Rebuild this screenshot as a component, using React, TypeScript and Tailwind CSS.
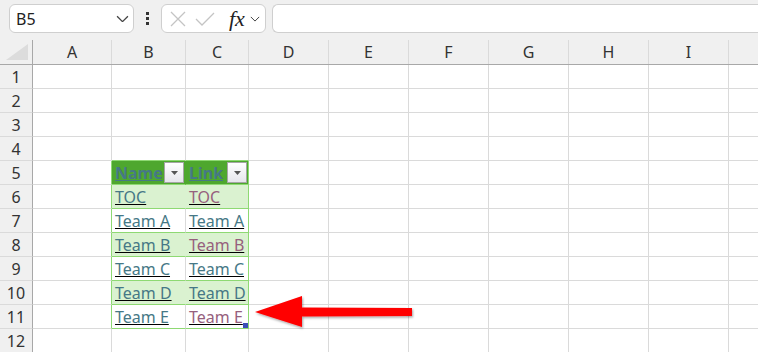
import React from "react";

const cols = ["A", "B", "C", "D", "E", "F", "G", "H", "I", ""];
const colW = [79, 74, 63, 80, 80, 80, 80, 80, 80, 30];

type Cell = { text: string; color: string } | null;

const BLUE = "#467886";
const PURPLE = "#96607d";

const tableRows: { b: Cell; c: Cell; band: boolean }[] = [
  { b: { text: "TOC", color: BLUE }, c: { text: "TOC", color: PURPLE }, band: true },
  { b: { text: "Team A", color: BLUE }, c: { text: "Team A", color: BLUE }, band: false },
  { b: { text: "Team B", color: BLUE }, c: { text: "Team B", color: PURPLE }, band: true },
  { b: { text: "Team C", color: BLUE }, c: { text: "Team C", color: BLUE }, band: false },
  { b: { text: "Team D", color: BLUE }, c: { text: "Team D", color: BLUE }, band: true },
  { b: { text: "Team E", color: BLUE }, c: { text: "Team E", color: PURPLE }, band: false },
];

function FilterBtn() {
  return (
    <div className="absolute right-[1px] top-[1px] w-[20px] h-[21px] border border-[#a5a5a5] bg-gradient-to-b from-white to-[#e6e6ec] flex items-center justify-center">
      <svg width="7" height="4" viewBox="0 0 7 4">
        <path d="M0 0 L7 0 L3.5 4 Z" fill="#555" />
      </svg>
    </div>
  );
}

function Chevron({ w = 12 }: { w?: number }) {
  return (
    <svg width={w} height={w * 0.6} viewBox="0 0 12 7" fill="none">
      <path d="M1 1 L6 6 L11 1" stroke="#444" strokeWidth="1.2" />
    </svg>
  );
}

export default function App() {
  const rowNums = Array.from({ length: 12 }, (_, i) => i + 1);
  return (
    <div
      className="w-[758px] h-[352px] overflow-hidden bg-white relative"
      style={{ fontFamily: "'Noto Sans', 'Open Sans', sans-serif" }}
    >
      {/* formula bar */}
      <div className="h-[40px] bg-[#f0f0f0] flex items-start pt-[4px] pl-[9px]">
        <div className="w-[125px] h-[29px] bg-white border border-[#cfcfcf] rounded-[6px] flex items-center justify-between pl-[6px] pr-[4px]">
          <span className="text-[16px] text-[#222]">B5</span>
          <Chevron w={13} />
        </div>
        <div className="w-[27px] h-[29px] flex flex-col items-center justify-center gap-[2px]">
          <div className="w-[3px] h-[3px] bg-[#333]" />
          <div className="w-[3px] h-[3px] bg-[#333]" />
          <div className="w-[3px] h-[3px] bg-[#333]" />
        </div>
        <div className="w-[105px] h-[29px] bg-white border border-[#cfcfcf] rounded-[6px] flex items-center pl-[6px]">
          <svg width="18" height="18" viewBox="0 0 18 18" className="ml-[1px]">
            <path d="M2 2 L16 16 M16 2 L2 16" stroke="#c4c4c4" strokeWidth="1.3" />
          </svg>
          <svg width="20" height="16" viewBox="0 0 20 16" className="ml-[8px]">
            <path d="M1 8 L7 14 L19 2" stroke="#c4c4c4" strokeWidth="1.3" fill="none" />
          </svg>
          <span
            className="ml-[14px] text-[22px] italic text-[#222] leading-none"
            style={{ fontFamily: "'Liberation Serif', serif" }}
          >
            fx
          </span>
          <span className="ml-[5px] flex items-center">
            <Chevron w={10} />
          </span>
        </div>
        <div className="ml-[6px] flex-1 h-[29px] bg-white border border-[#cfcfcf] border-r-0 rounded-l-[6px]" />
      </div>

      {/* column headers */}
      <div className="flex h-[25px] bg-[#f0f0f0] border-b border-[#a8a8a8]">
        <div className="w-[33px] shrink-0 border-r border-[#a8a8a8] relative">
          <svg width="22" height="16" viewBox="0 0 22 16" className="absolute right-[4px] bottom-[4px]">
            <path d="M22 0 L22 16 L0 16 Z" fill="#dcdcdc" />
          </svg>
        </div>
        {cols.map((c, i) => (
          <div
            key={i}
            style={{ width: colW[i] }}
            className="shrink-0 border-r border-[#dadada] flex items-center justify-center text-[16px] text-[#333]"
          >
            {c}
          </div>
        ))}
      </div>

      {/* rows */}
      {rowNums.map((r) => {
        const ti = r - 6;
        const tr = ti >= 0 && ti < tableRows.length ? tableRows[ti] : null;
        const isHeader = r === 5;
        return (
          <div key={r} className="flex h-[24px]">
            <div className="w-[33px] shrink-0 bg-[#f0f0f0] border-r border-[#a8a8a8] border-b border-b-[#dadada] flex items-center justify-center text-[16px] text-[#333]">
              {r}
            </div>
            {cols.map((_, i) => {
              const w = colW[i];
              if (isHeader && (i === 1 || i === 2)) {
                return (
                  <div
                    key={i}
                    style={{ width: w }}
                    className={`shrink-0 relative bg-[#4ea72e] border-b border-b-[#8ed973] ${
                      i === 1 ? "border-r border-r-[#4ea72e]" : "border-r border-r-[#8ed973]"
                    } flex items-center pl-[3px] text-[16px] font-bold underline text-[#467886]`}
                  >
                    {i === 1 ? "Name" : "Link"}
                    <FilterBtn />
                  </div>
                );
              }
              if (tr && (i === 1 || i === 2)) {
                const cell = i === 1 ? tr.b : tr.c;
                const bg = tr.band ? "bg-[#daf2d0]" : "bg-white";
                const rb =
                  i === 2
                    ? "border-r border-r-[#8ed973]"
                    : tr.band
                    ? "border-r border-r-[#daf2d0]"
                    : "border-r border-r-[#dadada]";
                return (
                  <div
                    key={i}
                    style={{ width: w }}
                    className={`shrink-0 relative ${bg} ${rb} border-b border-b-[#8ed973] flex items-center pl-[3px] text-[16px] underline`}
                  >
                    <span style={{ color: cell?.color }}>{cell?.text}</span>
                    {r === 11 && i === 2 && (
                      <div className="absolute right-[0px] bottom-[0px] w-[5px] h-[5px] bg-[#3c4fb8]" />
                    )}
                  </div>
                );
              }
              const topGreen = r === 4 && (i === 1 || i === 2);
              return (
                <div
                  key={i}
                  style={{ width: w }}
                  className={`shrink-0 border-r border-b ${
                    i === 0 && r >= 5 && r <= 11 ? "border-r-[#8ed973]" : "border-r-[#dadada]"
                  } ${topGreen ? "border-b-[#8ed973]" : "border-b-[#dadada]"}`}
                />
              );
            })}
          </div>
        );
      })}

      {/* red arrow overlay */}
      <svg
        className="absolute left-[250px] top-[290px]"
        width="170"
        height="42"
        viewBox="0 0 170 42"
      >
        <defs>
          <filter id="sh" x="-10%" y="-30%" width="130%" height="160%">
            <feDropShadow dx="1" dy="1.5" stdDeviation="1.2" floodColor="#000" floodOpacity="0.35" />
          </filter>
        </defs>
        <path
          d="M5 22 L52 6 L52 17.5 L162 18 L162 26 L52 26.5 L52 37 Z"
          fill="#ff0000"
          filter="url(#sh)"
        />
      </svg>
    </div>
  );
}
